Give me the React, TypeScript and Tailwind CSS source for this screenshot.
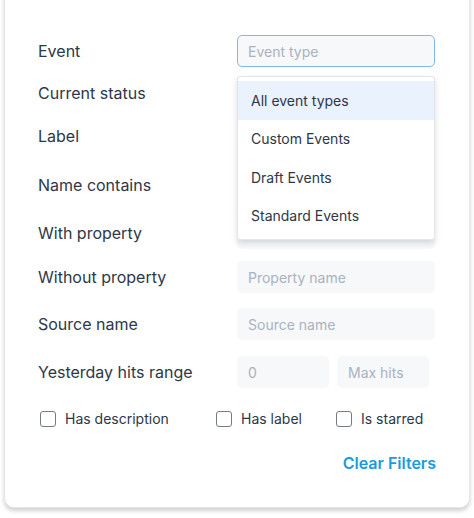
import React from 'react';

const font = { fontFamily: 'Inter, "Noto Sans", sans-serif' };

type Row = { label: string; mt: string; placeholder?: string; range?: boolean };

// rows 2-5 sit under the open dropdown, so their inputs show no text
const rows: Row[] = [
  { label: 'Current status', mt: 'mt-[10px]' },
  { label: 'Label', mt: 'mt-[11px]' },
  { label: 'Name contains', mt: 'mt-[17px]' },
  { label: 'With property', mt: 'mt-[16px]' },
  { label: 'Without property', mt: 'mt-[12px]', placeholder: 'Property name' },
  { label: 'Source name', mt: 'mt-[15px]', placeholder: 'Source name' },
  { label: 'Yesterday hits range', mt: 'mt-[16px]', range: true },
];

const options = ['All event types', 'Custom Events', 'Draft Events', 'Standard Events'];

function TextInput({ placeholder, className = '' }: { placeholder: string; className?: string }) {
  return (
    <input
      placeholder={placeholder}
      className={`h-8 rounded-[5px] bg-[#f7f8fa] px-[11px] text-[14px] text-[#2d3748] placeholder:text-[#a9b2c0] outline-none ${className}`}
    />
  );
}

function Check({ label, className = '' }: { label: string; className?: string }) {
  return (
    <label className={`flex items-center gap-[9px] text-[14px] text-[#2d3748] ${className}`}>
      <input
        type="checkbox"
        className="h-4 w-4 appearance-none rounded-[3px] border-[1.5px] border-[#737b86] bg-white"
      />
      {label}
    </label>
  );
}

export default function App() {
  return (
    <div className="h-[518px] w-[474px] overflow-hidden bg-white" style={font}>
      <div className="mx-1 mt-[-8px] rounded-b-[10px] border border-[#e4e6ea] bg-white px-[33px] pt-[42px] pb-[32px] shadow-[0_3px_4px_rgba(0,0,0,0.18)]">
        <div className="flex h-8 items-center">
          <span className="w-[199px] text-[16px] text-[#2d3748]">Event</span>
          <div className="relative">
            <input
              placeholder="Event type"
              className="h-8 w-[198px] rounded-[5px] border border-[#83b6ea] bg-[#f7f8fa] px-[10px] text-[14px] placeholder:text-[#a9b2c0] outline-none"
            />
            <div className="absolute left-0 top-[41px] z-10 w-[198px] rounded-[3px] border border-[#e2e5ea] bg-white py-[4px] shadow-[0_3px_6px_rgba(0,0,0,0.14)]">
              {options.map((o, i) => (
                <div
                  key={o}
                  className={`flex h-[38.5px] items-center px-[13px] text-[14px] text-[#2d3748] ${
                    i === 0 ? 'bg-[#eaf2fd]' : ''
                  }`}
                >
                  {o}
                </div>
              ))}
            </div>
          </div>
        </div>

        {rows.map((r) => (
          <div key={r.label} className={`flex h-8 items-center ${r.mt}`}>
            <span className="w-[199px] text-[16px] text-[#2d3748]">{r.label}</span>
            {r.range ? (
              <div className="flex gap-2">
                <TextInput placeholder="0" className="w-[92px]" />
                <TextInput placeholder="Max hits" className="w-[92px]" />
              </div>
            ) : (
              <TextInput placeholder={r.placeholder ?? ''} className="w-[198px]" />
            )}
          </div>
        ))}

        <div className="mt-[20px] flex items-center">
          <Check label="Has description" className="ml-[2px] w-[176px]" />
          <Check label="Has label" className="w-[120px]" />
          <Check label="Is starred" />
        </div>

        <div className="mt-[22px] flex justify-end">
          <button className="text-[16px] font-semibold text-[#1a9ae0]">Clear Filters</button>
        </div>
      </div>
    </div>
  );
}
